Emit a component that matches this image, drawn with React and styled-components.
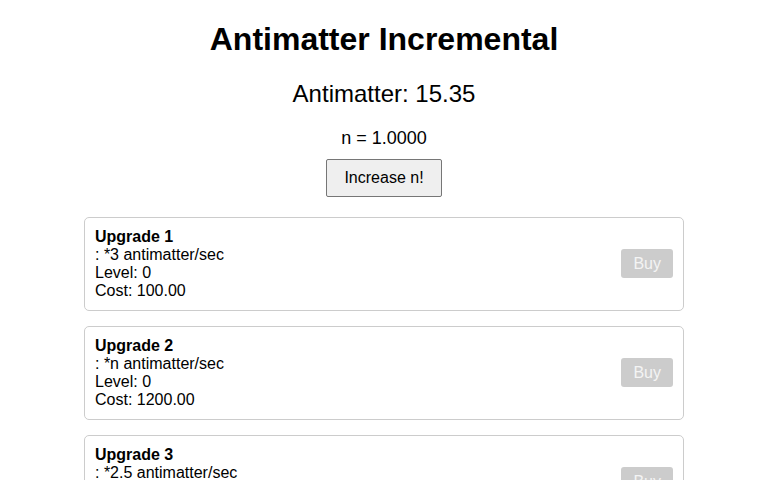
import styled, { createGlobalStyle } from "styled-components"

const GlobalStyle = createGlobalStyle`
  body {
    margin: 8px;
    font-family: "Liberation Sans", Arial, sans-serif;
    color: #000;
    background: #fff;
  }
`

const upgrades = [
  { name: "Upgrade 1", effect: "*3", level: 0, cost: "100.00" },
  { name: "Upgrade 2", effect: "*n", level: 0, cost: "1200.00" },
  { name: "Upgrade 3", effect: "*2.5", level: 0, cost: "15000.00" },
]

export default function App() {
  return (
    <>
      <GlobalStyle />
      <Main>
        <Title>Antimatter Incremental</Title>
        <Amount>Antimatter: 15.35</Amount>
        <NValue>n = 1.0000</NValue>
        <IncreaseButton>Increase n!</IncreaseButton>
        <List>
          {upgrades.map((u) => (
            <Card key={u.name}>
              <Info>
                <Name>{u.name}</Name>
                <div>: {u.effect} antimatter/sec</div>
                <div>Level: {u.level}</div>
                <div>Cost: {u.cost}</div>
              </Info>
              <BuyButton disabled>Buy</BuyButton>
            </Card>
          ))}
        </List>
      </Main>
    </>
  )
}

const Main = styled.div`
  display: flex;
  flex-direction: column;
  align-items: center;
  text-align: center;
`

const Title = styled.h1`
  font-size: 32px;
  font-weight: bold;
  margin: 13.44px 0 21.44px;
  line-height: 37px;
`

const Amount = styled.div`
  font-size: 24px;
  line-height: 28px;
  margin-bottom: 20px;
`

const NValue = styled.div`
  font-size: 18px;
  line-height: 21px;
  margin-bottom: 10px;
`

const IncreaseButton = styled.button`
  font-family: inherit;
  font-size: 16px;
  line-height: 18px;
  padding: 9px 17px;
  background: #efefef;
  border: 1px solid #767676;
  border-radius: 2px;
  color: #000;
  cursor: pointer;
`

const List = styled.div`
  display: flex;
  flex-direction: column;
  gap: 15px;
  width: 600px;
  margin-top: 20px;
`

const Card = styled.div`
  display: flex;
  align-items: center;
  justify-content: space-between;
  border: 1px solid #ccc;
  border-radius: 5px;
  padding: 10px;
  text-align: left;
  font-size: 16px;
  line-height: 18px;
`

const Info = styled.div`
  display: flex;
  flex-direction: column;
`

const Name = styled.div`
  font-weight: bold;
`

const BuyButton = styled.button`
  font-family: inherit;
  font-size: 16px;
  line-height: 19px;
  padding: 5px 12px;
  border: none;
  border-radius: 3px;
  background: #cccccc;
  color: #f4f4f4;
`
